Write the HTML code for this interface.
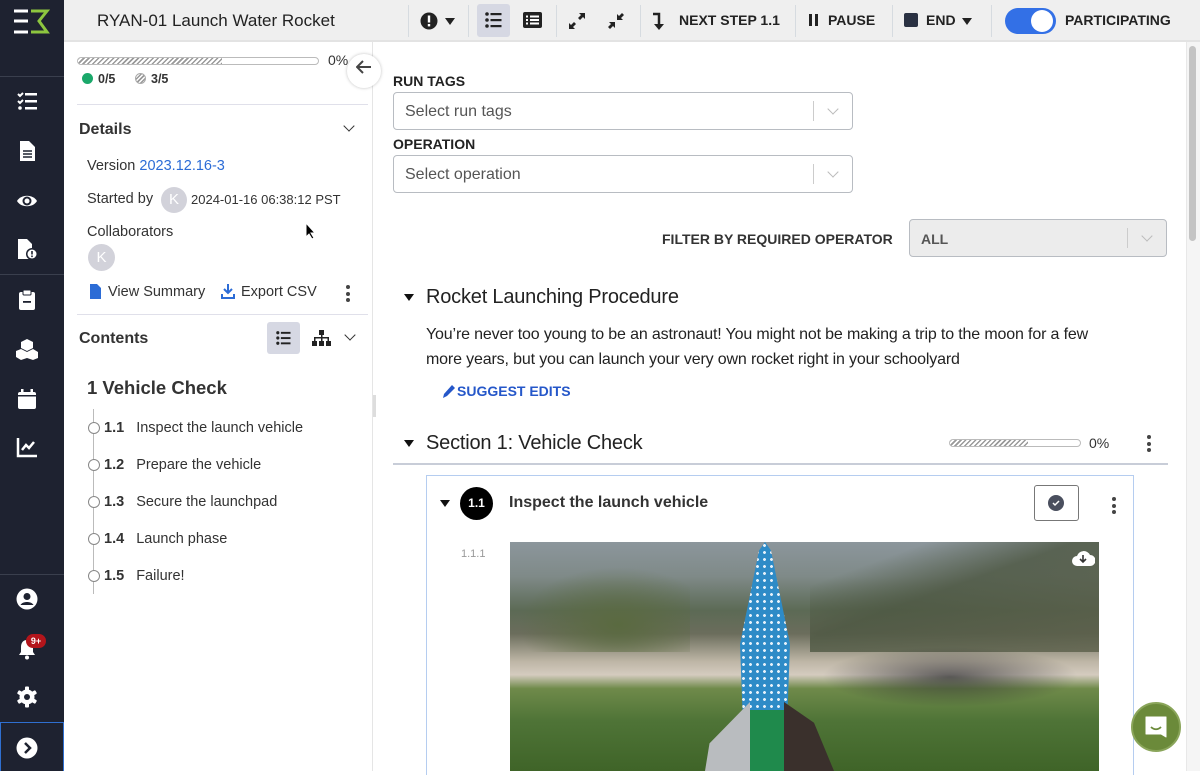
<!DOCTYPE html>
<html><head><meta charset="utf-8"><style>
*{box-sizing:border-box;margin:0;padding:0}
body{width:1200px;height:771px;overflow:hidden;font-family:"Liberation Sans",sans-serif;color:#222;background:#fff;position:relative}
.abs{position:absolute}
#side{left:0;top:0;width:64px;height:771px;background:#1e2230}
.ic{position:absolute;left:16px;width:22px;height:22px}
#hdr{left:64px;top:0;width:1136px;height:42px;background:#efefef;border-bottom:2px solid #e3e3e3}
.sep{position:absolute;top:5px;width:1px;height:32px;background:#d6dbe0}
.hb{position:absolute;top:12px;font-weight:bold;font-size:14px;color:#222}
#left{left:64px;top:42px;width:309px;height:729px;background:#fff;border-right:1px solid #e5e5e5}
.bar{height:8px;border-radius:4px;border:1px solid #bbb;background:#fff;overflow:hidden}
.hatch{height:100%;background:repeating-linear-gradient(135deg,#999 0 1.5px,#fff 1.5px 3.5px)}
.sel{position:absolute;left:393px;width:460px;height:38px;border:1px solid #b8bcc2;border-radius:4px;font-size:16px;color:#555;padding:10px 11px}
.sel .d{position:absolute;right:38px;top:8px;width:1px;height:20px;background:#ccc}
.chev{position:absolute;width:8px;height:8px;border-right:1.5px solid #bbb;border-bottom:1.5px solid #bbb;transform:rotate(45deg)}
.lbl{position:absolute;left:393px;font-size:14px;font-weight:bold;color:#222}
.tri{display:inline-block;width:0;height:0;border-left:5px solid transparent;border-right:5px solid transparent;border-top:7px solid #111}
.toc{position:absolute;left:104px;font-size:14.5px;color:#333}
.toc b{font-weight:bold;margin-right:8px}
.circ{position:absolute;left:88px;width:12px;height:12px;border:1px solid #888;border-radius:50%;background:#fff}
.dots{position:absolute;width:4px}
.dots i{display:block;width:4px;height:4px;border-radius:50%;background:#444;margin-bottom:2.5px}
</style></head><body>
<div id="side" class="abs">
 <svg class="abs" style="left:14px;top:8px" width="36" height="28" viewBox="0 0 36 28"><g stroke="#fff" stroke-width="3"><line x1="0" y1="3" x2="14" y2="3"/><line x1="0" y1="13" x2="14" y2="13"/><line x1="0" y1="24" x2="14" y2="24"/></g><path d="M17 3H33L25 13L33 24H17" stroke="#8dc63f" stroke-width="3" fill="none"/></svg>
 <div class="abs" style="left:0;top:76px;width:64px;height:1px;background:#3a3f4d"></div>
 <svg class="ic" style="top:90px" viewBox="0 0 22 22" fill="#fff"><path d="M2 4l2 2 3-3" stroke="#fff" stroke-width="2" fill="none"/><rect x="9" y="3" width="12" height="2.5"/><path d="M2 11l2 2 3-3" stroke="#fff" stroke-width="2" fill="none"/><rect x="9" y="10" width="12" height="2.5"/><circle cx="4" cy="18" r="1.8"/><rect x="9" y="17" width="12" height="2.5"/></svg>
 <svg class="ic" style="top:140px" viewBox="0 0 22 22"><path d="M4 1h9l6 6v14H4z" fill="#fff"/><g stroke="#1e2230" stroke-width="1.5"><line x1="7" y1="11" x2="16" y2="11"/><line x1="7" y1="14" x2="16" y2="14"/><line x1="7" y1="17" x2="16" y2="17"/></g></svg>
 <svg class="ic" style="top:190px" viewBox="0 0 22 22"><path d="M1 11C5 4 17 4 21 11C17 18 5 18 1 11Z" fill="#fff"/><circle cx="11" cy="11" r="4.5" fill="#1e2230"/><circle cx="11" cy="11" r="2.5" fill="#fff"/></svg>
 <svg class="ic" style="top:238px" viewBox="0 0 22 22"><path d="M2 1h9l5 5v15H2z" fill="#fff"/><circle cx="16" cy="16" r="6" fill="#1e2230"/><circle cx="16" cy="16" r="4.5" fill="#fff"/><rect x="15.2" y="13" width="1.6" height="3.5" fill="#1e2230"/><rect x="15.2" y="17.5" width="1.6" height="1.6" fill="#1e2230"/></svg>
 <div class="abs" style="left:0;top:274px;width:64px;height:1px;background:#3a3f4d"></div>
 <svg class="ic" style="top:289px" viewBox="0 0 22 22"><rect x="3" y="3" width="16" height="18" rx="2" fill="#fff"/><rect x="7" y="1" width="8" height="5" rx="1" fill="#fff" stroke="#1e2230"/><rect x="7" y="12" width="8" height="1.8" fill="#1e2230"/></svg>
 <svg class="ic" style="top:338px" viewBox="0 0 22 22" fill="#fff"><path d="M11 1l6 3v6l-6 3-6-3V4z"/><path d="M5 11l6 3v6l-6 2-5-3v-6z"/><path d="M17 11l5 3v6l-5 2-6-2v-6z"/></svg>
 <svg class="ic" style="top:388px" viewBox="0 0 22 22"><rect x="2" y="4" width="18" height="17" rx="2" fill="#fff"/><rect x="5" y="1" width="2.5" height="5" fill="#fff"/><rect x="14.5" y="1" width="2.5" height="5" fill="#fff"/><rect x="2" y="7" width="18" height="1.5" fill="#1e2230"/></svg>
 <svg class="ic" style="top:436px" viewBox="0 0 22 22" fill="none" stroke="#fff" stroke-width="2.5"><path d="M2 2v18h19"/><path d="M6 14l4-5 3 3 5-6"/></svg>
 <div class="abs" style="left:0;top:574px;width:64px;height:1px;background:#3a3f4d"></div>
 <svg class="ic" style="top:588px" viewBox="0 0 22 22"><circle cx="11" cy="11" r="10.5" fill="#fff"/><circle cx="11" cy="8.5" r="3.5" fill="#1e2230"/><path d="M4.5 17c2-4 11-4 13 0" fill="#1e2230"/></svg>
 <svg class="ic" style="top:638px" viewBox="0 0 22 22"><path d="M11 2c-4 0-6 3-6 7v5l-2 3h16l-2-3V9c0-4-2-7-6-7z" fill="#fff"/><circle cx="11" cy="19.5" r="2" fill="#fff"/></svg>
 <div class="abs" style="left:26px;top:634px;width:20px;height:14px;border-radius:7px;background:#b3151b;color:#fff;font-size:9px;font-weight:bold;text-align:center;line-height:14px">9+</div>
 <svg class="ic" style="top:686px" viewBox="0 0 22 22"><g fill="#fff"><circle cx="11" cy="11" r="7.5"/><g id="t"><rect x="9" y="0.5" width="4" height="5" rx="1"/><rect x="9" y="16.5" width="4" height="5" rx="1"/></g><use href="#t" transform="rotate(60 11 11)"/><use href="#t" transform="rotate(120 11 11)"/></g><circle cx="11" cy="11" r="3" fill="#1e2230"/></svg>
 <div class="abs" style="left:0;top:722px;width:64px;height:49px;border:1px solid #2f6fd0;border-bottom:none"></div>
 <svg class="ic" style="top:737px" viewBox="0 0 22 22"><circle cx="11" cy="11" r="10.5" fill="#fff"/><path d="M9 6l5 5-5 5" stroke="#1e2230" stroke-width="2.5" fill="none"/></svg>
</div>

<div id="hdr" class="abs">
 <div class="abs" style="left:33px;top:11px;font-size:17px;color:#222">RYAN-01 Launch Water Rocket</div>
 <div class="sep" style="left:344px"></div>
 <svg class="abs" style="left:356px;top:12px" width="18" height="18" viewBox="0 0 18 18"><circle cx="9" cy="9" r="8.5" fill="#222"/><rect x="7.8" y="3.5" width="2.4" height="7" fill="#fff"/><rect x="7.8" y="12" width="2.4" height="2.4" fill="#fff"/></svg>
 <div class="abs tri" style="left:381px;top:18px;border-top-color:#222"></div>
 <div class="sep" style="left:404px"></div>
 <div class="abs" style="left:413px;top:4px;width:33px;height:33px;background:#d6d8e3;border-radius:3px"></div>
 <svg class="abs" style="left:421px;top:12px" width="17" height="16" viewBox="0 0 17 16" fill="#222"><circle cx="2" cy="2" r="1.8"/><circle cx="2" cy="8" r="1.8"/><circle cx="2" cy="14" r="1.8"/><rect x="5.5" y="1" width="11" height="2.2"/><rect x="5.5" y="7" width="11" height="2.2"/><rect x="5.5" y="13" width="11" height="2.2"/></svg>
 <svg class="abs" style="left:459px;top:12px" width="19" height="16" viewBox="0 0 19 16"><rect x="0" y="0" width="19" height="16" rx="2" fill="#222"/><g fill="#fff"><rect x="3" y="3.5" width="2" height="2"/><rect x="7" y="3.5" width="9" height="2"/><rect x="3" y="7" width="2" height="2"/><rect x="7" y="7" width="9" height="2"/><rect x="3" y="10.5" width="2" height="2"/><rect x="7" y="10.5" width="9" height="2"/></g></svg>
 <div class="sep" style="left:492px"></div>
 <svg class="abs" style="left:505px;top:13px" width="16" height="16" viewBox="0 0 16 16" fill="#222"><path d="M10 0h6v6l-2-2-3 3-2-2 3-3zM6 16H0v-6l2 2 3-3 2 2-3 3z"/></svg>
 <svg class="abs" style="left:544px;top:13px" width="16" height="16" viewBox="0 0 16 16" fill="#222"><path d="M9 7V1l2 2 3-3 2 2-3 3 2 2zM7 9v6l-2-2-3 3-2-2 3-3-2-2z"/></svg>
 <div class="sep" style="left:576px"></div>
 <svg class="abs" style="left:588px;top:11px" width="14" height="20" viewBox="0 0 14 20"><path d="M1 3h6v12" stroke="#222" stroke-width="2.5" fill="none"/><path d="M2 13h10l-5 6z" fill="#222"/></svg>
 <div class="hb" style="left:615px">NEXT STEP 1.1</div>
 <div class="sep" style="left:731px"></div>
 <div class="abs" style="left:745px;top:14px;width:3px;height:12px;background:#222"></div>
 <div class="abs" style="left:751px;top:14px;width:3px;height:12px;background:#222"></div>
 <div class="hb" style="left:764px">PAUSE</div>
 <div class="sep" style="left:828px"></div>
 <div class="abs" style="left:840px;top:13px;width:14px;height:14px;background:#2a3142;border-radius:2px"></div>
 <div class="hb" style="left:862px">END</div>
 <div class="abs tri" style="left:898px;top:18px;border-top-color:#222"></div>
 <div class="sep" style="left:927px"></div>
 <div class="abs" style="left:941px;top:8px;width:51px;height:26px;border-radius:13px;background:#3370e6"></div>
 <div class="abs" style="left:967px;top:10px;width:22px;height:22px;border-radius:50%;background:#fff"></div>
 <div class="hb" style="left:1001px">PARTICIPATING</div>
</div>

<div id="left" class="abs">
 <div class="abs bar" style="left:13px;top:15px;width:242px"><div class="hatch" style="width:60%"></div></div>
 <div class="abs" style="left:264px;top:10px;font-size:14px;color:#333">0%</div>
 <div class="abs" style="left:283px;top:12px;width:34px;height:34px;border-radius:50%;background:#fff;box-shadow:0 0 3px rgba(0,0,0,.25)"></div>
 <svg class="abs" style="left:292px;top:18px" width="16" height="14" viewBox="0 0 16 14"><path d="M7 1L1 7l6 6M1 7h14" stroke="#444" stroke-width="2" fill="none"/></svg>
 <div class="abs" style="left:18px;top:31px;width:11px;height:11px;border-radius:50%;background:#1aa86a"></div>
 <div class="abs" style="left:34px;top:30px;font-size:12.5px;font-weight:bold;color:#333">0/5</div>
 <div class="abs" style="left:71px;top:31px;width:11px;height:11px;border-radius:50%;border:1px solid #aaa;background:repeating-linear-gradient(135deg,#999 0 1.5px,#fff 1.5px 3px)"></div>
 <div class="abs" style="left:87px;top:30px;font-size:12.5px;font-weight:bold;color:#333">3/5</div>
 <div class="abs" style="left:13px;top:62px;width:291px;height:1px;background:#e0e0ea"></div>
 <div class="abs" style="left:15px;top:79px;font-size:16px;font-weight:bold;color:#333">Details</div>
 <div class="chev" style="left:281px;top:80px;border-color:#333"></div>
 <div class="abs" style="left:23px;top:116px;font-size:14.5px;color:#333">Version <span style="color:#2c6cd6">2023.12.16-3</span></div>
 <div class="abs" style="left:23px;top:149px;font-size:14.5px;color:#333">Started by</div>
 <div class="abs" style="left:97px;top:145px;width:26px;height:26px;border-radius:50%;background:#d2d2da;color:#fff;font-size:15px;text-align:center;line-height:26px">K</div>
 <div class="abs" style="left:127px;top:150px;font-size:13px;color:#333">2024-01-16 06:38:12 PST</div>
 <div class="abs" style="left:23px;top:182px;font-size:14.5px;color:#333">Collaborators</div>
 <div class="abs" style="left:24px;top:202px;width:27px;height:27px;border-radius:50%;background:#d2d2da;color:#fff;font-size:15px;text-align:center;line-height:27px">K</div>
 <svg class="abs" style="left:26px;top:242px" width="11" height="15" viewBox="0 0 11 15"><path d="M0 0h7l4 4v11H0z" fill="#2c6cd6"/></svg>
 <div class="abs" style="left:44px;top:242px;font-size:14.5px;color:#333">View Summary</div>
 <svg class="abs" style="left:157px;top:242px" width="14" height="15" viewBox="0 0 14 15" fill="none" stroke="#2c6cd6" stroke-width="2"><path d="M7 0v9M3 5l4 4 4-4M1 10v4h12v-4"/></svg>
 <div class="abs" style="left:177px;top:242px;font-size:14.5px;color:#333">Export CSV</div>
 <div class="dots" style="left:282px;top:243px"><i></i><i></i><i></i></div>
 <div class="abs" style="left:13px;top:272px;width:291px;height:1px;background:#e0e0ea"></div>
 <div class="abs" style="left:15px;top:288px;font-size:16px;font-weight:bold;color:#333">Contents</div>
 <div class="abs" style="left:203px;top:280px;width:33px;height:32px;background:#d6d8e3;border-radius:3px"></div>
 <svg class="abs" style="left:212px;top:289px" width="15" height="14" viewBox="0 0 17 16" fill="#222"><circle cx="2" cy="2" r="1.8"/><circle cx="2" cy="8" r="1.8"/><circle cx="2" cy="14" r="1.8"/><rect x="5.5" y="1" width="11" height="2.2"/><rect x="5.5" y="7" width="11" height="2.2"/><rect x="5.5" y="13" width="11" height="2.2"/></svg>
 <svg class="abs" style="left:248px;top:288px" width="19" height="16" viewBox="0 0 19 16" fill="#222"><rect x="7" y="0" width="5" height="5"/><rect x="9" y="5" width="1.5" height="3"/><rect x="2" y="7" width="15" height="1.5"/><rect x="2" y="7" width="1.5" height="4"/><rect x="15.5" y="7" width="1.5" height="4"/><rect x="9" y="7" width="1.5" height="4"/><rect x="0" y="11" width="5" height="5"/><rect x="7" y="11" width="5" height="5"/><rect x="14" y="11" width="5" height="5"/></svg>
 <div class="chev" style="left:282px;top:289px;border-color:#333"></div>
 <div class="abs" style="left:23px;top:335px;font-size:18.5px;font-weight:bold;color:#333">1 Vehicle Check</div>
 <div class="abs" style="left:29px;top:367px;width:1px;height:185px;background:#bbb"></div>
</div>
<div class="circ" style="top:422px"></div><div class="toc" style="top:420px"><b>1.1</b> Inspect the launch vehicle</div>
<div class="circ" style="top:459px"></div><div class="toc" style="top:457px"><b>1.2</b> Prepare the vehicle</div>
<div class="circ" style="top:496px"></div><div class="toc" style="top:494px"><b>1.3</b> Secure the launchpad</div>
<div class="circ" style="top:533px"></div><div class="toc" style="top:531px"><b>1.4</b> Launch phase</div>
<div class="circ" style="top:570px"></div><div class="toc" style="top:568px"><b>1.5</b> Failure!</div>
<div class="abs" style="left:373px;top:395px;width:3px;height:22px;background:#ddd"></div>

<div class="abs" style="left:1186px;top:42px;width:14px;height:729px;background:#f5f5f5;border-left:1px solid #e8e8e8"></div>
<div class="abs" style="left:1189px;top:46px;width:7px;height:195px;border-radius:4px;background:#c4c4c4"></div>
<div class="lbl" style="top:73px">RUN TAGS</div>
<div class="sel" style="top:92px">Select run tags<div class="d"></div><div class="chev" style="right:15px;top:12px"></div></div>
<div class="lbl" style="top:136px">OPERATION</div>
<div class="sel" style="top:155px">Select operation<div class="d"></div><div class="chev" style="right:15px;top:12px"></div></div>
<div class="abs" style="left:662px;top:231px;font-size:14px;font-weight:bold;color:#333">FILTER BY REQUIRED OPERATOR</div>
<div class="sel" style="left:909px;top:219px;width:258px;background:#ececec;font-size:14px;font-weight:bold;color:#555;padding:11px 11px">ALL<div class="d"></div><div class="chev" style="right:15px;top:12px"></div></div>
<div class="abs tri" style="left:404px;top:294px"></div>
<div class="abs" style="left:426px;top:286px;font-size:20px;color:#222;letter-spacing:-.2px">Rocket Launching Procedure</div>
<div class="abs" style="left:426px;top:322px;width:684px;font-size:16px;line-height:25px;color:#222;letter-spacing:-.15px">You’re never too young to be an astronaut! You might not be making a trip to the moon for a few more years, but you can launch your very own rocket right in your schoolyard</div>
<svg class="abs" style="left:443px;top:384px" width="13" height="14" viewBox="0 0 13 14"><path d="M9 1l3 3-8 8-4 2 1-4z" fill="#2557c9"/></svg>
<div class="abs" style="left:457px;top:383px;font-size:14px;font-weight:bold;color:#2557c9">SUGGEST EDITS</div>
<div class="abs tri" style="left:404px;top:440px"></div>
<div class="abs" style="left:426px;top:432px;font-size:20px;color:#222;letter-spacing:-.2px">Section 1: Vehicle Check</div>
<div class="abs bar" style="left:949px;top:439px;width:132px"><div class="hatch" style="width:60%"></div></div>
<div class="abs" style="left:1089px;top:435px;font-size:14px;color:#333">0%</div>
<div class="dots" style="left:1147px;top:435px"><i></i><i></i><i></i></div>
<div class="abs" style="left:393px;top:463px;width:775px;height:2px;background:#c8cdd8"></div>
<div class="abs" style="left:426px;top:475px;width:708px;height:300px;border:1.5px solid #b5cdf0;border-bottom:none"></div>
<div class="abs tri" style="left:440px;top:500px"></div>
<div class="abs" style="left:460px;top:487px;width:33px;height:33px;border-radius:50%;background:#000;color:#fff;font-size:12px;font-weight:bold;text-align:center;line-height:33px">1.1</div>
<div class="abs" style="left:509px;top:494px;font-size:16px;font-weight:bold;color:#333">Inspect the launch vehicle</div>
<div class="abs" style="left:1034px;top:485px;width:45px;height:36px;border:1.5px solid #777;border-radius:3px"></div>
<div class="abs" style="left:1048px;top:495px;width:16px;height:16px;border-radius:50%;background:#4a4f5e"></div>
<svg class="abs" style="left:1051px;top:498px" width="10" height="10"><path d="M2 5l2 2 4-4" stroke="#fff" stroke-width="1.5" fill="none"/></svg>
<div class="dots" style="left:1112px;top:497px"><i></i><i></i><i></i></div>
<div class="abs" style="left:461px;top:548px;font-size:11px;color:#999">1.1.1</div>
<div class="abs" style="left:510px;top:542px;width:589px;height:229px;overflow:hidden;background:linear-gradient(180deg,#8c969c 0%,#7f8a88 15%,#5c6a55 30%,#6b6d5c 40%,#bdb5a5 52%,#d4cbbf 58%,#6f8a4a 64%,#4f7437 78%,#3f6428 100%)">
 <div class="abs" style="left:300px;top:0;width:289px;height:110px;background:linear-gradient(160deg,transparent 20%,#4d5742 45%,#5b5f4a 100%);opacity:.8"></div>
 <div class="abs" style="left:0;top:20px;width:180px;height:90px;background:radial-gradient(ellipse at 60% 70%,#5a6a40,transparent 65%)"></div>
 <div class="abs" style="left:290px;top:100px;width:300px;height:70px;background:radial-gradient(ellipse,#2b2b30 0%,transparent 60%);opacity:.7"></div>
 <div class="abs" style="left:230px;top:0;width:50px;height:170px;background:radial-gradient(circle,#e6f1fa 1.3px,#2e8bc7 1.6px) 0 0/7px 7px;clip-path:polygon(50% 0,62% 5%,100% 60%,95% 100%,5% 100%,0 60%,38% 5%)"></div>
 <div class="abs" style="left:238px;top:168px;width:36px;height:61px;background:#1f8a4c"></div>
 <div class="abs" style="left:195px;top:160px;width:45px;height:69px;background:#b9bcbf;clip-path:polygon(100% 0,100% 100%,0 100%,10% 60%)"></div>
 <div class="abs" style="left:274px;top:160px;width:50px;height:69px;background:#3a302c;clip-path:polygon(0 0,60% 30%,100% 100%,0 100%)"></div>
 <svg class="abs" style="left:561px;top:6px" width="24" height="20" viewBox="0 0 24 20"><path d="M6 18a5 5 0 010-10 7 7 0 0113-1 5 5 0 010 11z" fill="#fff"/><path d="M12 7v7M9 11l3 3 3-3" stroke="#333" stroke-width="1.6" fill="none"/></svg>
</div>
<div class="abs" style="left:1131px;top:702px;width:50px;height:50px;border-radius:50%;background:#6b8a3a;border:2px solid #8aa55a"></div>
<svg class="abs" style="left:1143px;top:714px" width="26" height="26" viewBox="0 0 26 26"><path d="M3 3h20v20l-5-3H3z" fill="#fff" stroke="#fff" stroke-linejoin="round"/><path d="M8 13c3 3 7 3 10 0" stroke="#6b8a3a" stroke-width="1.8" fill="none"/></svg>
<svg class="abs" style="left:305px;top:222px" width="12" height="18" viewBox="0 0 12 18"><path d="M1 1v14l3-3 3 5 2-1-3-5h4z" fill="#000" stroke="#fff"/></svg>
</body></html>
